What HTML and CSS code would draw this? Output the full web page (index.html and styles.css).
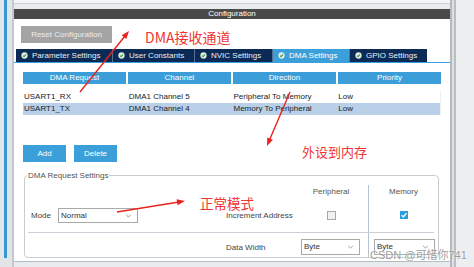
FILE: index.html
```html
<!DOCTYPE html>
<html lang="zh">
<head>
  <meta charset="UTF-8" />
  <title>DMA Settings</title>
  <link rel="stylesheet" href="styles.css">
</head>
<body>
  <div class="window">
    <div class="gutter-left"><span class="accent"></span></div>

    <main class="panel">
      <div class="panel-title">Configuration</div>
      <div class="panel-body">
        <button class="btn-reset">Reset Configuration</button>

        <nav class="tabs">
          <div class="tab tab-param"><svg class="ok" viewBox="0 0 8 8"><circle cx="4" cy="4" r="3.6"/><path d="M2.3 4.1 3.5 5.3 5.8 2.8"/></svg>Parameter Settings</div>
          <div class="tab tab-user"><svg class="ok" viewBox="0 0 8 8"><circle cx="4" cy="4" r="3.6"/><path d="M2.3 4.1 3.5 5.3 5.8 2.8"/></svg>User Constants</div>
          <div class="tab tab-nvic"><svg class="ok" viewBox="0 0 8 8"><circle cx="4" cy="4" r="3.6"/><path d="M2.3 4.1 3.5 5.3 5.8 2.8"/></svg>NVIC Settings</div>
          <div class="tab tab-dma active"><svg class="ok" viewBox="0 0 8 8"><circle cx="4" cy="4" r="3.6"/><path d="M2.3 4.1 3.5 5.3 5.8 2.8"/></svg>DMA Settings</div>
          <div class="tab tab-gpio"><svg class="ok" viewBox="0 0 8 8"><circle cx="4" cy="4" r="3.6"/><path d="M2.3 4.1 3.5 5.3 5.8 2.8"/></svg>GPIO Settings</div>
        </nav>

        <div class="dma-table">
          <div class="th">DMA Request</div>
          <div class="th">Channel</div>
          <div class="th">Direction</div>
          <div class="th">Priority</div>

          <div class="tr">
            <div class="td">USART1_RX</div>
            <div class="td">DMA1 Channel 5</div>
            <div class="td">Peripheral To Memory</div>
            <div class="td">Low</div>
          </div>
          <div class="tr selected">
            <div class="td">USART1_TX</div>
            <div class="td">DMA1 Channel 4</div>
            <div class="td">Memory To Peripheral</div>
            <div class="td">Low</div>
          </div>
        </div>

        <div class="actions">
          <button class="btn">Add</button>
          <button class="btn">Delete</button>
        </div>

        <fieldset class="req-settings">
          <legend>DMA Request Settings</legend>

          <div class="set-row set-head">
            <div></div>
            <div></div>
            <div class="col-p">Peripheral</div>
            <div class="col-m">Memory</div>
          </div>

          <div class="set-row set-mode">
            <div class="mode">
              <span>Mode</span>
              <div class="select select-mode">Normal<svg class="chev" viewBox="0 0 8 5"><path d="M1 1 4 4 7 1"/></svg></div>
            </div>
            <div class="label">Increment Address</div>
            <div class="col-p"><span class="check"></span></div>
            <div class="col-m"><span class="check on"><svg viewBox="0 0 8 8"><path d="M1.6 4.2 3.3 5.8 6.5 2.2"/></svg></span></div>
          </div>

          <div class="set-line"></div>

          <div class="set-row set-width">
            <div></div>
            <div class="label">Data Width</div>
            <div class="col-p"><div class="select select-p">Byte<svg class="chev" viewBox="0 0 8 5"><path d="M1 1 4 4 7 1"/></svg></div></div>
            <div class="col-m"><div class="select select-m">Byte<svg class="chev" viewBox="0 0 8 5"><path d="M1 1 4 4 7 1"/></svg></div></div>
          </div>
        </fieldset>
      </div>
    </main>

    <div class="gutter-right"></div>
  </div>

  <!-- red annotations drawn over the screenshot -->
  <svg class="marks" viewBox="0 0 474 267">
    <line x1="80" y1="92" x2="125" y2="36"/>
    <polygon points="129,31 126.3,39.1 121.7,35.3"/>
    <line x1="290" y1="92" x2="269.5" y2="140"/>
    <polygon points="267,146 272.9,139.8 267.3,137.4"/>
    <line x1="117" y1="212" x2="179" y2="202"/>
    <polygon points="185,201 177.6,205.3 176.6,199.3"/>
  </svg>
  <div class="note note-rx">DMA接收通道</div>
  <div class="note note-dir">外设到内存</div>
  <div class="note note-mode">正常模式</div>
  <div class="watermark">CSDN @可惜你741</div>
</body>
</html>
```

FILE: styles.css
```css
html, body {
  margin: 0;
  padding: 0;
  width: 474px;
  height: 267px;
  overflow: hidden;
  font-family: 'Liberation Sans', Arial, sans-serif;
  font-size: 8px;
  color: #2a2a2a;
  background: linear-gradient(#f4f5f6 0 3px, #cdd1d4 3px 4px, #e9ecee 4px);
}
body {
  position: relative;
}
.window {
  display: flex;
  height: 267px;
}
.gutter-left {
  width: 14px;
  padding-left: 4px;
  box-sizing: border-box;
  border-right: 2px solid #c4c9cd;
  background: #e1e5e8;
}
.accent {
  display: block;
  width: 3px;
  height: 258px;
  background: #3796d4;
}
.panel {
  width: 436px;
  margin-top: 9px;
  height: 252px;
  background: #fff;
  border-bottom: 1px solid #b6bbbf;
  display: flex;
  flex-direction: column;
}
.panel-title {
  height: 10px;
  line-height: 10px;
  background: #4a4a4a;
  color: #fff;
  text-align: center;
}
.panel-body {
  padding-top: 7px;
  display: flex;
  flex-direction: column;
  align-items: flex-start;
}
button {
  font-family: inherit;
  font-size: 8px;
  border: none;
  padding: 0;
  color: #fff;
}
.btn-reset {
  margin-left: 7px;
  width: 91px;
  height: 17px;
  background: #a4a4a4;
  color: #eeeeee;
}
.tabs {
  margin-top: 6px;
  align-self: stretch;
  display: flex;
  padding-left: 2px;
  border-bottom: 1px solid #3ba0d9;
}
.tab {
  height: 13px;
  display: flex;
  align-items: center;
  gap: 4px;
  padding-left: 5px;
  box-sizing: border-box;
  background: #0b2b56;
  color: #e9eef4;
  border-right: 1px solid #56708f;
}
.tab-param { width: 97px; }
.tab-user { width: 82px; }
.tab-nvic { width: 78px; }
.tab-dma { width: 77px; }
.tab-gpio { width: 77px; border-right: none; }
.tab.active {
  background: #3ba0d9;
  color: #fff;
}
.ok {
  width: 7px;
  height: 7px;
}
.ok circle {
  fill: #e4ece4;
}
.ok path {
  fill: none;
  stroke: #3b9a48;
  stroke-width: 1.2;
}
.dma-table {
  margin: 9px 9px 0 9px;
  align-self: stretch;
  display: grid;
  grid-template-columns: repeat(4, 1fr);
  column-gap: 2px;
}
.th {
  height: 12px;
  line-height: 12px;
  background: #3b9ed8;
  color: #fff;
  text-align: center;
}
.tr {
  grid-column: 1 / -1;
  display: grid;
  grid-template-columns: repeat(4, 1fr);
  column-gap: 2px;
  height: 12px;
  line-height: 12px;
  border-right: 1px solid #eef0f2;
}
.dma-table .tr:nth-child(5) {
  margin-top: 7px;
}
.td {
  padding-left: 1px;
  color: #222;
}
.tr.selected {
  background: #b9d0e8;
}
.actions {
  margin: 30px 0 0 9px;
  display: flex;
  gap: 8px;
}
.btn {
  width: 43px;
  height: 17px;
  background: #3ba0d9;
}
.req-settings {
  margin: 9px 0 0 10px;
  width: 415px;
  box-sizing: border-box;
  height: 87px;
  padding: 0;
  border: 1px solid #c8cccf;
  border-radius: 4px;
  min-width: 0;
}
.req-settings legend {
  margin-left: 2px;
  padding: 0 1px;
  line-height: 9px;
  color: #555;
}
.set-row {
  display: grid;
  grid-template-columns: 201px 72px 70px 70px;
  align-items: stretch;
}
.set-row > div {
  display: flex;
  align-items: center;
}
.col-p {
  justify-content: center;
}
.col-m {
  justify-content: center;
  border-left: 1px solid #b8c4d2;
}
.set-head {
  margin-top: 5px;
  height: 13px;
  color: #555;
}
.set-head .col-p { padding-right: 4px; }
.set-mode {
  height: 34px;
}
.mode {
  padding-left: 6px;
  gap: 7px;
  color: #444;
}
.label {
  color: #444;
}
.select {
  position: relative;
  box-sizing: border-box;
  height: 15px;
  line-height: 13px;
  border: 1px solid #a9a9a9;
  background: #fff;
  padding-left: 2px;
  color: #333;
}
.chev {
  position: absolute;
  right: 5px;
  top: 5px;
  width: 7px;
  height: 4px;
}
.chev path {
  fill: none;
  stroke: #888;
  stroke-width: 1;
}
.select-mode { width: 80px; }
.set-width {
  height: 24px;
}
.set-width > div {
  padding-top: 4px;
  box-sizing: border-box;
}
.set-width .col-p {
  justify-content: flex-start;
  padding-left: 3px;
}
.set-width .col-m {
  justify-content: flex-start;
  padding-left: 5px;
}
.select-p { width: 59px; height: 16px; }
.select-m { width: 61px; height: 16px; }
.check {
  display: block;
  width: 7px;
  height: 7px;
  margin-right: 4px;
  border: 1px solid #a8a8a8;
  background: #f2f2f2;
}
.check.on {
  width: 8px;
  height: 8px;
  margin: 0;
  border: none;
  background: #2c9de0;
}
.check.on svg {
  display: block;
  width: 8px;
  height: 8px;
}
.check.on path {
  fill: none;
  stroke: #fff;
  stroke-width: 1.3;
}
.set-line {
  height: 1px;
  margin: 0 4px 0 3px;
  background: #c9d0d8;
}
.gutter-right {
  flex: 1;
  background: linear-gradient(to right, #b3b8bc 0 2px, #dde1e4 2px 4px, #b9bec2 4px 6px, #eceef0 6px);
}
.marks {
  position: absolute;
  left: 0;
  top: 0;
  width: 474px;
  height: 267px;
  pointer-events: none;
}
.marks line {
  stroke: #e8231f;
  stroke-width: 1.4;
}
.marks polygon {
  fill: #e8231f;
}
.note {
  position: absolute;
  font-family: 'Noto Sans CJK SC', sans-serif;
  line-height: 1;
  color: #ef3535;
  white-space: nowrap;
}
.note-rx {
  left: 145px;
  top: 30px;
  font-size: 14px;
}
.note-dir {
  left: 302px;
  top: 145px;
  font-size: 13px;
}
.note-mode {
  left: 200px;
  top: 197px;
  font-size: 13.5px;
}
.watermark {
  position: absolute;
  left: 370px;
  top: 250px;
  font-family: 'Liberation Sans', 'Noto Sans CJK SC', sans-serif;
  font-size: 11px;
  line-height: 1;
  color: rgba(140, 140, 140, 0.85);
  text-shadow: 0 0 2px #fff;
  white-space: nowrap;
}
```
